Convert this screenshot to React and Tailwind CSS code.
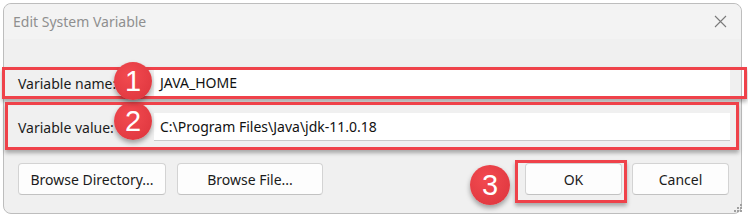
import React from "react";

const font = { fontFamily: '"Noto Sans", "Open Sans", sans-serif' };

function Btn({ children, w }) {
  return (
    <button
      className={`h-[32px] ${w} rounded-[4px] border border-[#d3d3d3] border-b-[#c2c2c2] bg-[#fdfdfd] text-[14px] text-[#1b1b1b] flex items-center justify-center`}
    >
      {children}
    </button>
  );
}

function Badge({ n, pos, size }) {
  return (
    <div
      className={`absolute ${pos} ${size} rounded-full bg-[radial-gradient(circle_at_40%_35%,#f24a50,#dc343c)] shadow-[0_3px_5px_rgba(0,0,0,0.35)] flex items-center justify-center text-white text-[29px] leading-none`}
      style={{ fontFamily: '"Liberation Sans", Arial, sans-serif' }}
    >
      {n}
    </div>
  );
}

export default function App() {
  return (
    <div className="relative w-[748px] h-[217px] bg-white overflow-hidden" style={font}>
      <div className="ml-[3px] mt-[3px] w-[739px] h-[211px] rounded-[8px] border border-[#bdbdbd] bg-[#f0f0f0] flex flex-col">
        <div className="h-[35px] flex items-center justify-between pl-[9px] pr-[14px] rounded-t-[8px] bg-[#f3f3f3]">
          <span className="text-[14px] text-[#8f8f8f]">Edit System Variable</span>
          <svg width="13" height="13" viewBox="0 0 13 13">
            <path d="M1 1L12 12M12 1L1 12" stroke="#7a7a7a" strokeWidth="1.1" />
          </svg>
        </div>
        <div className="pt-[30px] pl-[14px] pr-[11px] grid grid-cols-[136px_1fr] gap-y-[16px] items-center">
          <span className="text-[14px] text-[#1b1b1b]">Variable name:</span>
          <div className="h-[28px] bg-white border-b border-[#c9c9c9] flex items-center pl-[6px] text-[14px] text-[#111]">
            JAVA_HOME
          </div>
          <span className="text-[14px] text-[#1b1b1b]">Variable value:</span>
          <div className="h-[28px] bg-white border-b border-[#c9c9c9] flex items-center pl-[6px] text-[14px] text-[#111]">
            C:\Program Files\Java\jdk-11.0.18
          </div>
        </div>
        <div className="mt-[22px] pl-[14px] pr-[12px] flex items-center">
          <div className="flex gap-[11px]">
            <Btn w="w-[148px]">Browse Directory...</Btn>
            <Btn w="w-[146px]">Browse File...</Btn>
          </div>
          <div className="ml-auto flex gap-[10px]">
            <Btn w="w-[97px]">OK</Btn>
            <Btn w="w-[97px]">Cancel</Btn>
          </div>
        </div>
      </div>

      {/* resize grip */}
      <svg className="absolute left-[733px] top-[203px]" width="10" height="10" viewBox="0 0 10 10">
        <rect x="7" y="1" width="2" height="2" fill="#a0a0a0" />
        <rect x="4" y="4" width="2" height="2" fill="#a0a0a0" />
        <rect x="7" y="4" width="2" height="2" fill="#a0a0a0" />
        <rect x="1" y="7" width="2" height="2" fill="#a0a0a0" />
        <rect x="4" y="7" width="2" height="2" fill="#a0a0a0" />
        <rect x="7" y="7" width="2" height="2" fill="#a0a0a0" />
      </svg>

      {/* annotation boxes */}
      <div className="absolute left-[2px] top-[67px] w-[745px] h-[32px] border-[3px] border-[#ef424a] shadow-[0_3px_4px_rgba(0,0,0,0.3)]" />
      <div className="absolute left-[5px] top-[102px] w-[734px] h-[48px] border-[3px] border-[#ef424a] shadow-[0_3px_4px_rgba(0,0,0,0.3)]" />
      <div className="absolute left-[515px] top-[160px] w-[112px] h-[43px] border-[3px] border-[#ef424a] shadow-[0_3px_4px_rgba(0,0,0,0.3)]" />

      <Badge n="2" pos="left-[114px] top-[102px]" size="w-[38px] h-[38px]" />
      <Badge n="1" pos="left-[114px] top-[62px]" size="w-[38px] h-[38px]" />
      <Badge n="3" pos="left-[470px] top-[165px]" size="w-[40px] h-[40px]" />
    </div>
  );
}
